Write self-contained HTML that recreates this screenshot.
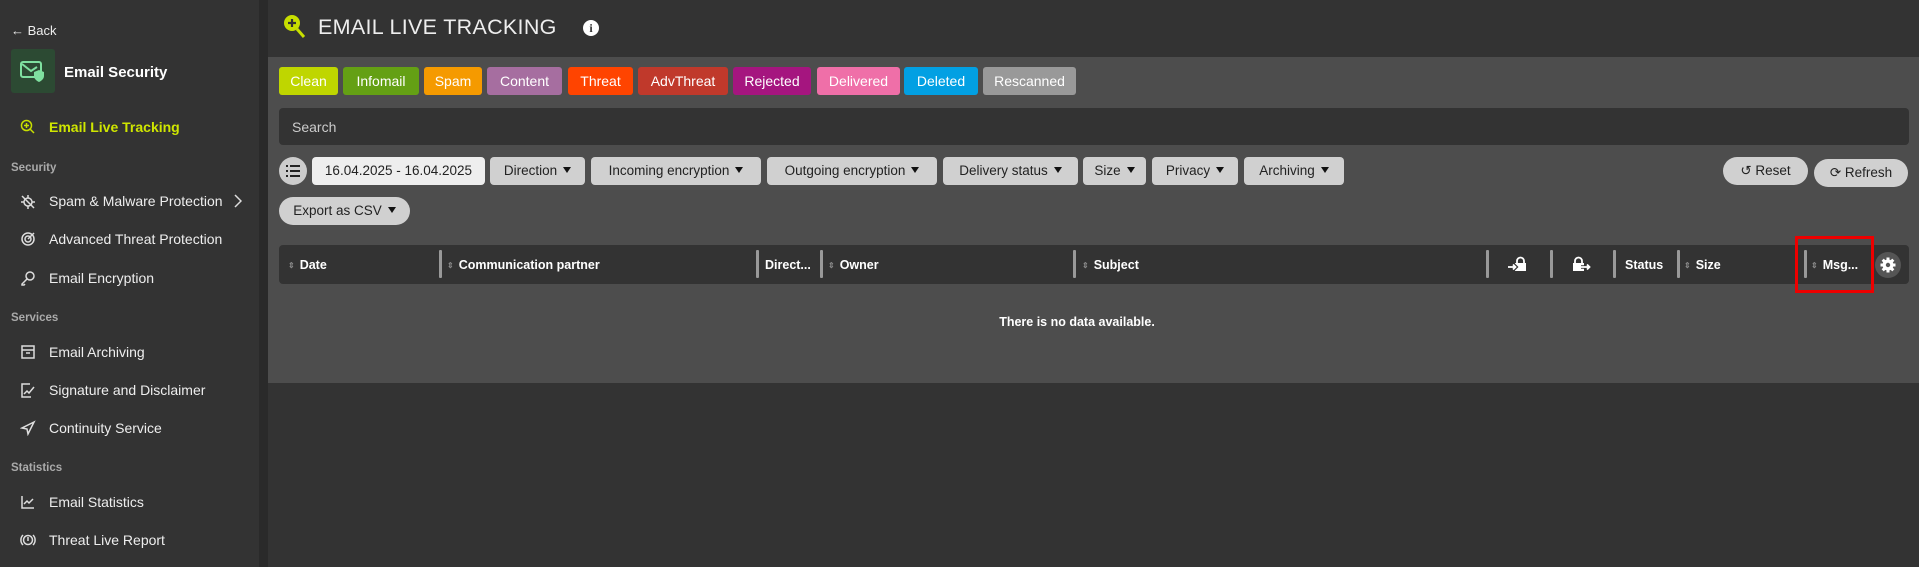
<!DOCTYPE html>
<html><head><meta charset="utf-8"><style>
*{box-sizing:border-box;margin:0;padding:0}
body{width:1919px;height:567px;background:#333;font-family:"Liberation Sans",sans-serif;position:relative;overflow:hidden;color:#fff}
.a{position:absolute}
.nav{position:absolute;left:49px;font-size:14px;color:#eee;white-space:nowrap}
.ic{position:absolute;left:20px;width:16px;height:16px}
.sec{position:absolute;left:11px;font-size:11.5px;font-weight:bold;color:#aaa}
.chip{position:absolute;top:67px;height:28px;border-radius:3px;font-size:14px;color:#fff;text-align:center;line-height:28px}
.btn{position:absolute;top:157px;height:28px;border-radius:4px;background:#d0d0d0;color:#222;font-size:13.5px;line-height:28px;text-align:center;white-space:nowrap}
.tri{display:inline-block;width:0;height:0;border-left:4.5px solid transparent;border-right:4.5px solid transparent;border-top:6px solid #111;margin-left:6px;vertical-align:2px}
.th{position:absolute;top:258px;font-size:12.5px;font-weight:bold;color:#fff;white-space:nowrap}
.sep{position:absolute;top:250px;width:3px;height:28px;background:#999;border-radius:1px}
.sort{color:#888;font-size:8px;margin-right:5px;vertical-align:1px}
</style></head><body>
<div class="a" style="left:0;top:0;width:259px;height:567px;background:#333"></div>
<div class="a" style="left:259px;top:0;width:9px;height:567px;background:#2a2a2a"></div>

<div class="a" style="left:11px;top:23px;font-size:13px;color:#eee">&#8592; Back</div>
<div class="a" style="left:11px;top:49px;width:44px;height:44px;background:#2c4a33;border-radius:3px"></div>
<svg class="a" style="left:19px;top:60px" width="28" height="22" viewBox="0 0 28 22"><rect x="2" y="2" width="20" height="15" rx="2" fill="none" stroke="#7fe0a0" stroke-width="2"/><path d="M3 4l9 7 6-4" fill="none" stroke="#7fe0a0" stroke-width="2"/><path d="M20 10l5 2v4c0 3-3 5-5 6-2-1-5-3-5-6v-4z" fill="#7fe0a0"/></svg>
<div class="a" style="left:64px;top:64px;font-size:15px;font-weight:bold">Email Security</div>

<svg class="ic" style="top:119px" viewBox="0 0 16 16"><circle cx="6.5" cy="6.5" r="5" fill="none" stroke="#c8df00" stroke-width="1.5"/><path d="M10 10l4 4M6.5 4v5M4 6.5h5" stroke="#c8df00" stroke-width="1.5"/></svg>
<div class="nav" style="top:119px;color:#cfe600;font-weight:bold">Email Live Tracking</div>
<div class="sec" style="top:162px">Security</div>
<svg class="ic" style="top:194px" viewBox="0 0 16 16"><circle cx="8" cy="8" r="4" fill="none" stroke="#ddd" stroke-width="1.5"/><path d="M2 2l12 12M8 1v3M8 12v3M1 8h3M12 8h3" stroke="#ddd" stroke-width="1.5"/></svg>
<div class="nav" style="top:193px">Spam &amp; Malware Protection</div>
<svg class="a" style="left:234px;top:194px" width="8" height="14" viewBox="0 0 8 14"><path d="M1 1l6 6-6 6" fill="none" stroke="#ddd" stroke-width="1.5"/></svg>
<svg class="ic" style="top:231px" viewBox="0 0 16 16"><circle cx="8" cy="8" r="6" fill="none" stroke="#ddd" stroke-width="1.5"/><circle cx="8" cy="8" r="3" fill="none" stroke="#ddd" stroke-width="1.5"/><path d="M8 8l6-6" stroke="#ddd" stroke-width="1.5"/></svg>
<div class="nav" style="top:231px">Advanced Threat Protection</div>
<svg class="ic" style="top:270px" viewBox="0 0 16 16"><circle cx="10" cy="6" r="4" fill="none" stroke="#ddd" stroke-width="1.5"/><path d="M7 9l-5 5v1h2l1-1" fill="none" stroke="#ddd" stroke-width="1.5"/></svg>
<div class="nav" style="top:270px">Email Encryption</div>
<div class="sec" style="top:312px">Services</div>
<svg class="ic" style="top:344px" viewBox="0 0 16 16"><rect x="2" y="2" width="12" height="12" fill="none" stroke="#ddd" stroke-width="1.5"/><path d="M2 6h12M6 9h4" stroke="#ddd" stroke-width="1.5"/></svg>
<div class="nav" style="top:344px">Email Archiving</div>
<svg class="ic" style="top:382px" viewBox="0 0 16 16"><path d="M10 2H2v13h9M4 12l3-3 2 2 5-6" fill="none" stroke="#ddd" stroke-width="1.5"/></svg>
<div class="nav" style="top:382px">Signature and Disclaimer</div>
<svg class="ic" style="top:420px" viewBox="0 0 16 16"><path d="M14 2L2 8l5 1 1 5z" fill="none" stroke="#ddd" stroke-width="1.5"/></svg>
<div class="nav" style="top:420px">Continuity Service</div>
<div class="sec" style="top:462px">Statistics</div>
<svg class="ic" style="top:494px" viewBox="0 0 16 16"><path d="M2 2v12h12M4 10l3-3 2 2 4-4" fill="none" stroke="#ddd" stroke-width="1.5"/></svg>
<div class="nav" style="top:494px">Email Statistics</div>
<svg class="ic" style="top:532px" viewBox="0 0 16 16"><circle cx="8" cy="8" r="4.5" fill="none" stroke="#ddd" stroke-width="1.5"/><path d="M3 3a7 7 0 0 0 0 10M13 3a7 7 0 0 1 0 10M8 5v4" fill="none" stroke="#ddd" stroke-width="1.5"/></svg>
<div class="nav" style="top:532px">Threat Live Report</div>

<svg class="a" style="left:283px;top:14px" width="24" height="26" viewBox="0 0 24 26"><circle cx="9" cy="9" r="8" fill="#c8df00"/><path d="M9 5v8M5 9h8" stroke="#333" stroke-width="2.2"/><path d="M14 15l7 8" stroke="#c8df00" stroke-width="3"/></svg>
<div class="a" style="left:318px;top:15px;font-size:21.5px;color:#eee;letter-spacing:0.3px">EMAIL LIVE TRACKING</div>
<div class="a" style="left:583px;top:20px;width:16px;height:16px;border-radius:50%;background:#fff;color:#333;font-size:12px;font-weight:bold;text-align:center;line-height:16px;font-family:'Liberation Serif',serif">i</div>

<div class="a" style="left:268px;top:57px;width:1651px;height:326px;background:#4d4d4d"></div>
<div class="chip" style="left:279px;width:59px;background:#bfd600">Clean</div>
<div class="chip" style="left:343px;width:76px;background:#64a014">Infomail</div>
<div class="chip" style="left:424px;width:58px;background:#f59a00">Spam</div>
<div class="chip" style="left:487px;width:75px;background:#a66ea0">Content</div>
<div class="chip" style="left:568px;width:65px;background:#ff4400">Threat</div>
<div class="chip" style="left:638px;width:90px;background:#c0392b">AdvThreat</div>
<div class="chip" style="left:733px;width:78px;background:#a5157f">Rejected</div>
<div class="chip" style="left:817px;width:83px;background:#ef6fa8">Delivered</div>
<div class="chip" style="left:904px;width:74px;background:#02a0e3">Deleted</div>
<div class="chip" style="left:983px;width:93px;background:#999">Rescanned</div>

<div class="a" style="left:279px;top:108px;width:1630px;height:37px;background:#333;border-radius:4px"></div>
<div class="a" style="left:292px;top:119px;font-size:14px;color:#ccc">Search</div>

<div class="a" style="left:279px;top:157px;width:28px;height:28px;border-radius:50%;background:#ccc"></div>
<svg class="a" style="left:286px;top:165px" width="14" height="12" viewBox="0 0 14 12"><path d="M0 1h2M4 1h10M0 6h2M4 6h10M0 11h2M4 11h10" stroke="#222" stroke-width="2"/></svg>
<div class="btn" style="left:312px;width:173px;background:#eee">16.04.2025 - 16.04.2025</div>
<div class="btn" style="left:490px;width:95px">Direction<span class="tri"></span></div>
<div class="btn" style="left:591px;width:170px">Incoming encryption<span class="tri"></span></div>
<div class="btn" style="left:767px;width:170px">Outgoing encryption<span class="tri"></span></div>
<div class="btn" style="left:943px;width:135px">Delivery status<span class="tri"></span></div>
<div class="btn" style="left:1083px;width:63px">Size<span class="tri"></span></div>
<div class="btn" style="left:1152px;width:86px">Privacy<span class="tri"></span></div>
<div class="btn" style="left:1244px;width:100px">Archiving<span class="tri"></span></div>
<div class="btn" style="left:1723px;width:85px;border-radius:14px">&#8634; Reset</div>
<div class="btn" style="left:1814px;top:159px;width:94px;border-radius:14px">&#10227; Refresh</div>
<div class="btn" style="left:279px;top:197px;width:131px;border-radius:14px">Export as CSV<span class="tri"></span></div>

<div class="a" style="left:279px;top:245px;width:1630px;height:39px;background:#333;border-radius:4px"></div>
<div class="th" style="left:288px"><span class="sort">&#8661;</span>Date</div>
<div class="sep" style="left:439px"></div>
<div class="th" style="left:447px"><span class="sort">&#8661;</span>Communication partner</div>
<div class="sep" style="left:756px"></div>
<div class="th" style="left:765px">Direct...</div>
<div class="sep" style="left:820px"></div>
<div class="th" style="left:828px"><span class="sort">&#8661;</span>Owner</div>
<div class="sep" style="left:1073px"></div>
<div class="th" style="left:1082px"><span class="sort">&#8661;</span>Subject</div>
<div class="sep" style="left:1486px"></div>
<svg class="a" style="left:1508px;top:256px" width="20" height="16" viewBox="0 0 20 16"><path d="M9 7V5a3.5 3.5 0 0 1 7 0v2" fill="none" stroke="#fff" stroke-width="1.8"/><rect x="7" y="7" width="11" height="8" fill="#fff"/><path d="M0 11h7M5 8l3 3-3 3" fill="none" stroke="#333" stroke-width="3.5"/><path d="M0 11h7M5 8.5l2.5 2.5-2.5 2.5" fill="none" stroke="#fff" stroke-width="1.8"/></svg>
<div class="sep" style="left:1550px"></div>
<svg class="a" style="left:1572px;top:256px" width="20" height="16" viewBox="0 0 20 16"><path d="M3 7V5a3.5 3.5 0 0 1 7 0v2" fill="none" stroke="#fff" stroke-width="1.8"/><rect x="1" y="7" width="11" height="8" fill="#fff"/><path d="M9 11h8M15 8.5l2.5 2.5-2.5 2.5" fill="none" stroke="#333" stroke-width="3.5"/><path d="M9 11h8M15 8.5l2.5 2.5-2.5 2.5" fill="none" stroke="#fff" stroke-width="1.8"/></svg>
<div class="sep" style="left:1613px"></div>
<div class="th" style="left:1625px">Status</div>
<div class="sep" style="left:1677px"></div>
<div class="th" style="left:1684px"><span class="sort">&#8661;</span>Size</div>
<div class="sep" style="left:1804px"></div>
<div class="th" style="left:1811px"><span class="sort">&#8661;</span>Msg...</div>
<div class="a" style="left:1875px;top:252px;width:26px;height:26px;border-radius:50%;background:#555"></div>
<svg class="a" style="left:1880px;top:257px" width="16" height="16" viewBox="0 0 16 16"><g fill="#fff"><circle cx="8" cy="8" r="5.5"/><rect x="6.5" y="0.5" width="3" height="15"/><rect x="0.5" y="6.5" width="15" height="3"/><rect x="6.5" y="0.5" width="3" height="15" transform="rotate(45 8 8)"/><rect x="6.5" y="0.5" width="3" height="15" transform="rotate(-45 8 8)"/></g><circle cx="8" cy="8" r="2.2" fill="#555"/></svg>
<div class="a" style="left:1795px;top:236px;width:79px;height:57px;border:3px solid #e00"></div>
<div class="a" style="left:877px;top:315px;width:400px;text-align:center;font-size:12.5px;font-weight:bold;color:#fff">There is no data available.</div>
</body></html>
